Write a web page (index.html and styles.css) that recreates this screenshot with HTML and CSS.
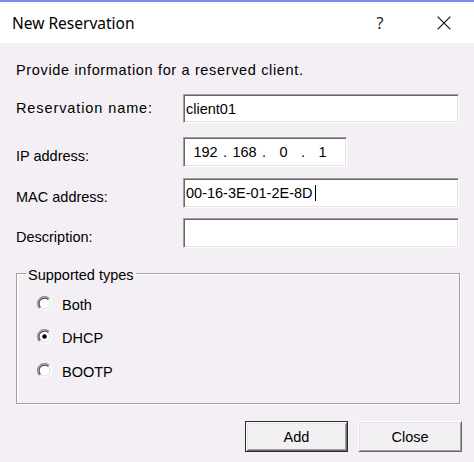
FILE: index.html
```html
<!DOCTYPE html>
<html lang="en">
<head>
<meta charset="utf-8">
<title>New Reservation</title>
<link rel="stylesheet" href="styles.css">
</head>
<body>
<div class="window">
  <div class="topline"></div>
  <div class="titlebar">
    <span class="title">New Reservation</span>
    <span class="tb-btn help">?</span>
    <span class="tb-btn close">
      <svg width="14" height="14" viewBox="0 0 14 14"><path d="M0.6 0.6L13.4 13.4M13.4 0.6L0.6 13.4" stroke="#1e1e1e" stroke-width="1.3" fill="none"/></svg>
    </span>
  </div>
  <div class="content">
    <p class="intro">Provide information for a reserved client.</p>
    <div class="form">
      <div class="row row-name">
        <span class="lbl lbl-name">Reservation name:</span>
        <div class="field field-name">client01</div>
      </div>
      <div class="row row-ip">
        <span class="lbl">IP address:</span>
        <div class="field field-ip">
          <span class="oct">192</span><span class="dot">.</span><span class="oct">168</span><span class="dot">.</span><span class="oct">0</span><span class="dot">.</span><span class="oct">1</span>
        </div>
      </div>
      <div class="row row-mac">
        <span class="lbl">MAC address:</span>
        <div class="field">00-16-3E-01-2E-8D<span class="caret"></span></div>
      </div>
      <div class="row row-desc">
        <span class="lbl">Description:</span>
        <div class="field"></div>
      </div>
    </div>
    <div class="group">
      <div class="legend">Supported types</div>
      <div class="radios">
        <div class="radio">
          <svg class="rb" width="15" height="15" viewBox="0 0 12 12">
            <circle cx="6" cy="6" r="4.6" fill="#fff"/>
            <path d="M2.11 9.89A5.5 5.5 0 0 1 9.89 2.11" fill="none" stroke="#8c8c8c"/>
            <path d="M9.89 2.11A5.5 5.5 0 0 1 2.11 9.89" fill="none" stroke="#ffffff"/>
            <path d="M2.82 9.18A4.5 4.5 0 0 1 9.18 2.82" fill="none" stroke="#505050"/>
            <path d="M9.18 2.82A4.5 4.5 0 0 1 2.82 9.18" fill="none" stroke="#e3e3e3"/>
          </svg>
          <span class="rtext">Both</span>
        </div>
        <div class="radio">
          <svg class="rb" width="15" height="15" viewBox="0 0 12 12">
            <circle cx="6" cy="6" r="4.6" fill="#fff"/>
            <path d="M2.11 9.89A5.5 5.5 0 0 1 9.89 2.11" fill="none" stroke="#8c8c8c"/>
            <path d="M9.89 2.11A5.5 5.5 0 0 1 2.11 9.89" fill="none" stroke="#ffffff"/>
            <path d="M2.82 9.18A4.5 4.5 0 0 1 9.18 2.82" fill="none" stroke="#505050"/>
            <path d="M9.18 2.82A4.5 4.5 0 0 1 2.82 9.18" fill="none" stroke="#e3e3e3"/>
            <circle cx="6" cy="6" r="1.8" fill="#000"/>
          </svg>
          <span class="rtext">DHCP</span>
        </div>
        <div class="radio">
          <svg class="rb" width="15" height="15" viewBox="0 0 12 12">
            <circle cx="6" cy="6" r="4.6" fill="#fff"/>
            <path d="M2.11 9.89A5.5 5.5 0 0 1 9.89 2.11" fill="none" stroke="#8c8c8c"/>
            <path d="M9.89 2.11A5.5 5.5 0 0 1 2.11 9.89" fill="none" stroke="#ffffff"/>
            <path d="M2.82 9.18A4.5 4.5 0 0 1 9.18 2.82" fill="none" stroke="#505050"/>
            <path d="M9.18 2.82A4.5 4.5 0 0 1 2.82 9.18" fill="none" stroke="#e3e3e3"/>
          </svg>
          <span class="rtext">BOOTP</span>
        </div>
      </div>
    </div>
    <div class="buttons">
      <button class="btn btn-default" type="button">Add</button>
      <button class="btn" type="button">Close</button>
    </div>
  </div>
</div>
</body>
</html>
```
FILE: styles.css
```css
html, body {
  margin: 0;
  padding: 0;
}

body {
  width: 474px;
  height: 462px;
  overflow: hidden;
  background: #f4eff5;
  font-family: "Liberation Sans", Arial, sans-serif;
  font-size: 14.5px;
  color: #000;
}

.window {
  width: 474px;
  height: 462px;
  background: #f4eff5;
}

.topline {
  height: 2px;
  background: #7a8cf0;
}

.titlebar {
  height: 41px;
  background: #ffffff;
  display: flex;
  align-items: center;
  padding-left: 12px;
}

.title {
  flex: 1;
  font-family: "Noto Sans", "Open Sans", sans-serif;
  font-size: 15.5px;
  line-height: 20px;
  color: #000;
}

.tb-btn {
  width: 60px;
  display: flex;
  justify-content: center;
  align-items: center;
}

.help {
  font-family: "Noto Sans", "Open Sans", sans-serif;
  font-size: 16px;
  line-height: 20px;
  color: #222;
}

.close {
  margin-left: 4px;
  height: 20px;
}

.content {
  padding: 0 14px 0 16px;
}

.intro {
  margin: 19px 0 0;
  line-height: 16px;
  letter-spacing: 0.65px;
}

.form {
  margin-top: 16px;
  display: flex;
  flex-direction: column;
}

.row {
  display: grid;
  grid-template-columns: 167px 276px;
  align-items: start;
}

.row-name { margin-bottom: 14px; }
.row-ip { margin-bottom: 11px; }
.row-mac { margin-bottom: 10px; }

.lbl {
  padding-top: 11px;
  line-height: 16px;
  white-space: nowrap;
}

.lbl-name {
  padding-top: 6px;
  letter-spacing: 0.9px;
}

.field {
  box-sizing: border-box;
  height: 30px;
  background: #ffffff;
  border: 1px solid;
  border-color: #a0a0a0 #ffffff #ffffff #a0a0a0;
  box-shadow: inset 1px 1px 0 #696969, inset -1px -1px 0 #e3e3e3;
  padding: 6px 2px 0;
  line-height: 16px;
  white-space: nowrap;
}

.field-name {
  height: 29px;
}

.field-ip {
  width: 164px;
  display: flex;
  padding-left: 4px;
}

.oct {
  width: 35px;
  text-align: center;
}

.dot {
  width: 4px;
  text-align: center;
}

.caret {
  display: inline-block;
  width: 1px;
  height: 16px;
  background: #000;
  margin-left: 2px;
  vertical-align: top;
}

.group {
  margin-top: 25px;
  border: 1px solid #a0a0a0;
  box-shadow: inset 1px 1px 0 #ffffff, 1px 1px 0 #ffffff;
  padding: 0 0 22px;
}

.legend {
  display: block;
  width: max-content;
  margin: -7px 0 0 9px;
  padding: 0 2px;
  line-height: 16px;
  background: #f4eff5;
}

.radios {
  margin-top: 9px;
  display: flex;
  flex-direction: column;
  gap: 11.5px;
  padding-left: 20px;
}

.radio {
  height: 22px;
  display: flex;
  align-items: center;
}

.rb {
  display: block;
  flex: none;
}

.rtext {
  margin-left: 10px;
  margin-top: 3px;
  line-height: 16px;
}

.buttons {
  margin-top: 17px;
  margin-right: -2px;
  display: flex;
  justify-content: flex-end;
  gap: 10px;
}

.btn {
  box-sizing: border-box;
  width: 104px;
  height: 31px;
  margin: 0;
  padding: 0;
  background: #f3f0f4;
  font-family: "Liberation Sans", Arial, sans-serif;
  font-size: 14.5px;
  line-height: 16px;
  color: #000;
  border: 1px solid;
  border-color: #ffffff #696969 #696969 #ffffff;
  box-shadow: inset 1px 1px 0 #e3e3e3, inset -1px -1px 0 #a0a0a0;
  border-radius: 0;
  display: flex;
  align-items: center;
  justify-content: center;
}

.btn-default {
  width: 103px;
  border: 1px solid #2a2a2a;
  box-shadow: inset 1px 1px 0 #ffffff, inset -1px -1px 0 #696969, inset 2px 2px 0 #e3e3e3, inset -2px -2px 0 #a0a0a0;
}
```
